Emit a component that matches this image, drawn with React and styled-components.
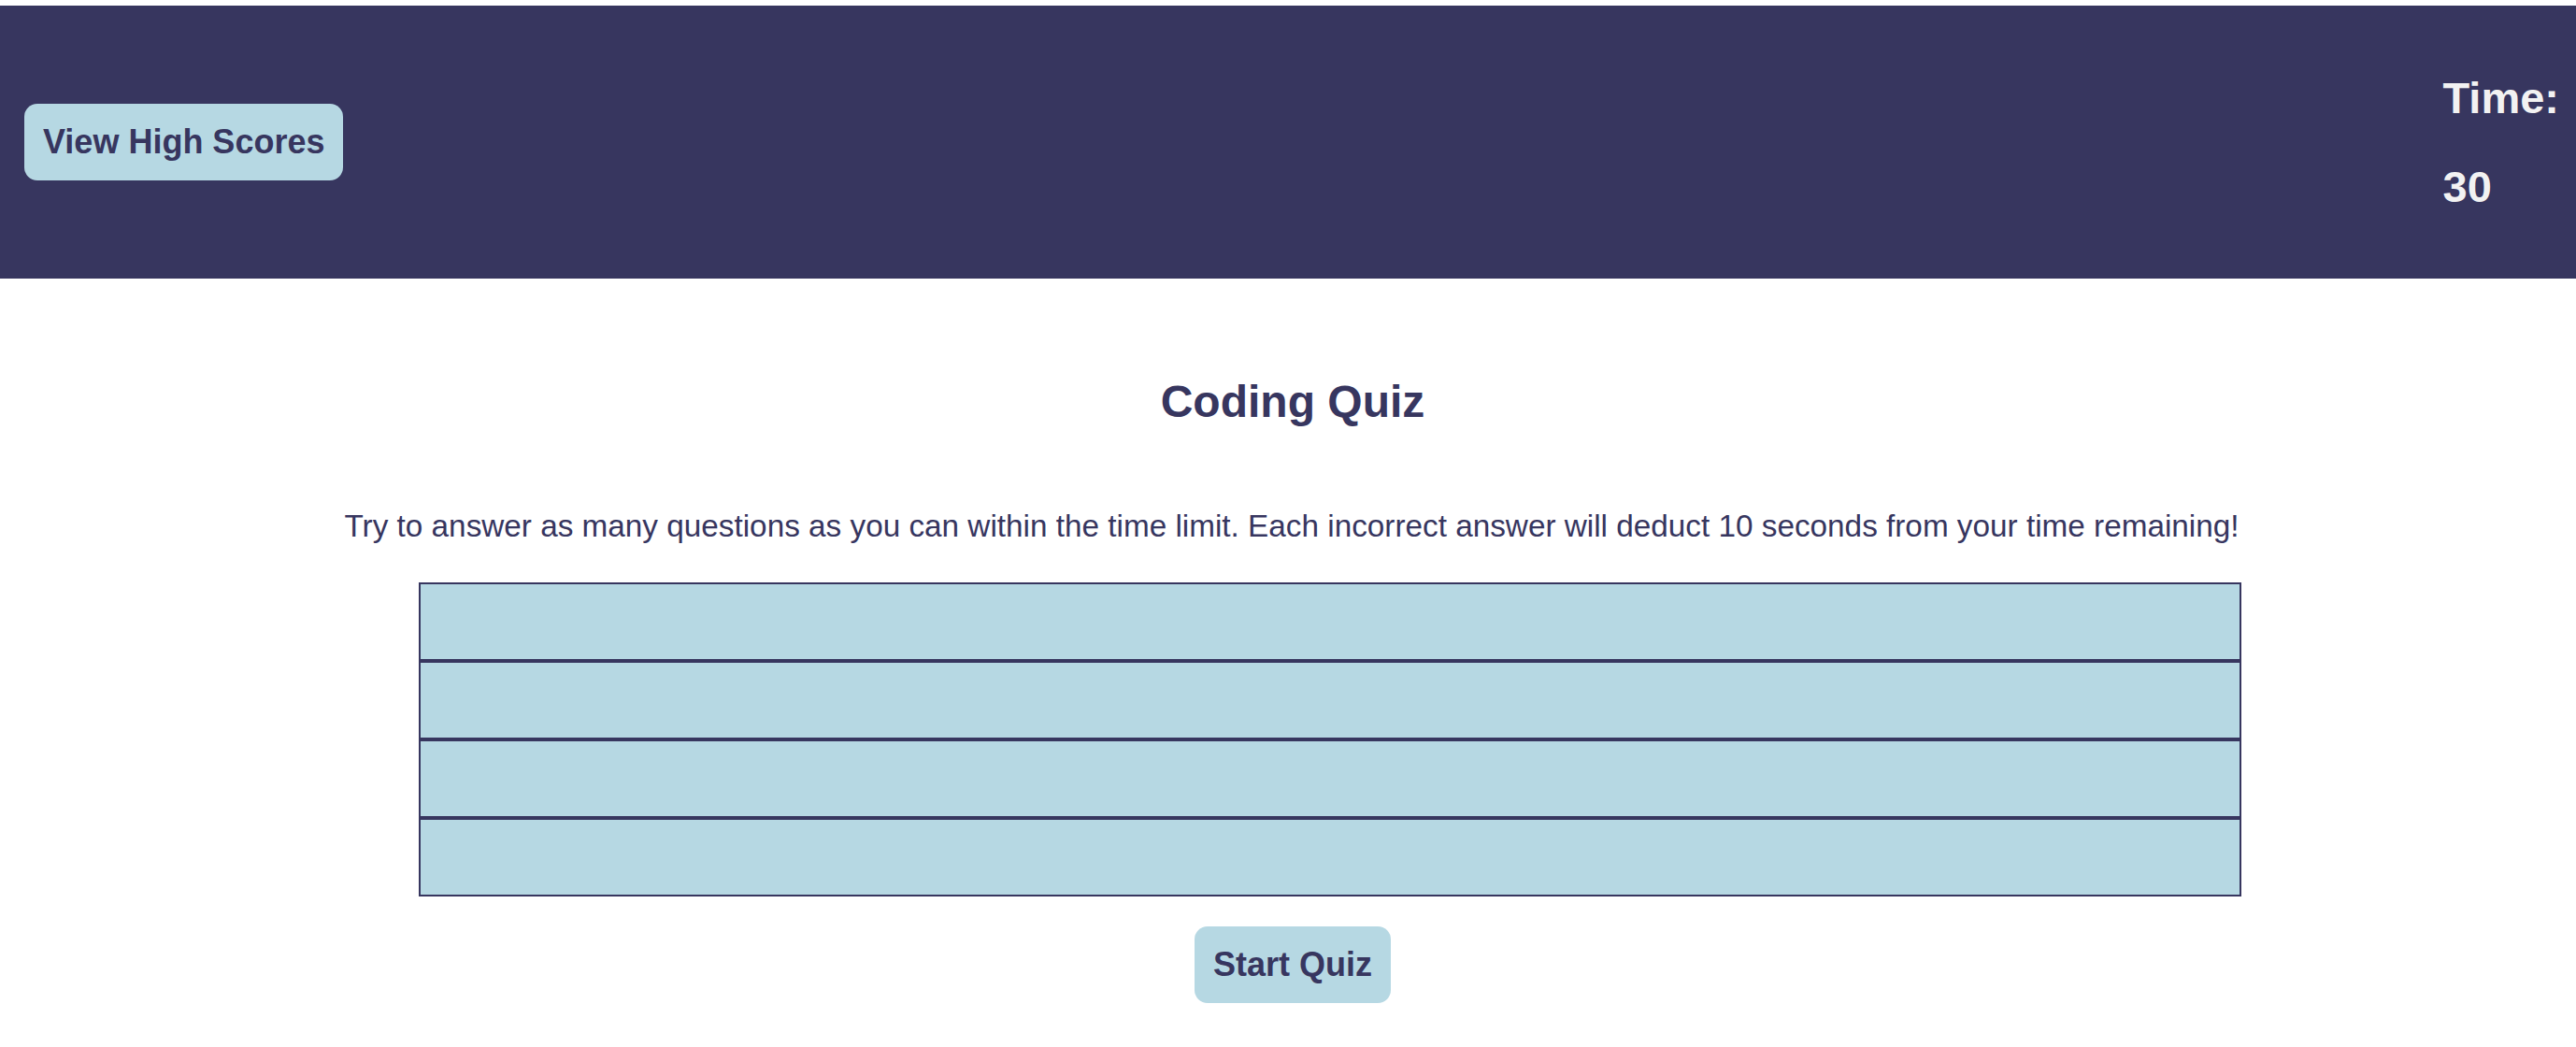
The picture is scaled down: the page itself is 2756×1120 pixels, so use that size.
import React from "react";
import styled, { createGlobalStyle } from "styled-components";

const GlobalStyle = createGlobalStyle`
  * {
    box-sizing: border-box;
  }

  body {
    margin: 0;
    padding-top: 6px;
    background: #ffffff;
    font-family: "Liberation Sans", Arial, Helvetica, sans-serif;
    color: #37365f;
  }
`;

const App = () => {
  return (
    <>
      <GlobalStyle />
      <Header>
        <NavButton>View High Scores</NavButton>
        <TimerBlock>
          <TimerText>Time:</TimerText>
          <TimerText>30</TimerText>
        </TimerBlock>
      </Header>
      <Main>
        <Title>Coding Quiz</Title>
        <Intro>
          Try to answer as many questions as you can within the time limit.
          Each incorrect answer will deduct 10 seconds from your time remaining!
        </Intro>
        <AnswerWrapper>
          <AnswerList>
            <AnswerItem />
            <AnswerItem />
            <AnswerItem />
            <AnswerItem />
          </AnswerList>
        </AnswerWrapper>
        <StartButton>Start Quiz</StartButton>
      </Main>
    </>
  );
};

const Header = styled.header`
  height: 292px;
  background-color: #37365f;
  display: flex;
  align-items: center;
  justify-content: space-between;
  padding: 0 18px 0 26px;
`;

const Button = styled.button`
  border: none;
  border-radius: 14px;
  background-color: #b6d8e3;
  color: #37365f;
  font-family: "Liberation Sans", Arial, Helvetica, sans-serif;
  font-weight: 700;
  font-size: 36px;
  line-height: 42px;
  padding: 20px 20px;
  cursor: pointer;
`;

const NavButton = styled(Button)``;

const TimerBlock = styled.div`
  display: flex;
  flex-direction: column;
  gap: 40px;
`;

const TimerText = styled.div`
  color: #f2f2f2;
  font-weight: 700;
  font-size: 47px;
  line-height: 55px;
`;

const Main = styled.main`
  display: flex;
  flex-direction: column;
  align-items: center;
  padding: 104px 0 0 10px;
`;

const Title = styled.h2`
  margin: 0;
  font-size: 48px;
  line-height: 55px;
  font-weight: 700;
  color: #37365f;
`;

const Intro = styled.p`
  margin: 87px 2px 0 0;
  font-size: 33.3px;
  line-height: 37px;
  color: #37365f;
  text-align: center;
`;

const AnswerWrapper = styled.div`
  width: 2030px;
  padding-left: 80px;
  margin-top: 42px;
`;

const AnswerList = styled.ul`
  list-style: none;
  margin: 0;
  padding: 0;
  display: flex;
  flex-direction: column;
`;

const AnswerItem = styled.li`
  height: 84px;
  background-color: #b6d8e3;
  border: 2px solid #37365f;
`;

const StartButton = styled(Button)`
  margin-top: 32px;
`;

export default App;
